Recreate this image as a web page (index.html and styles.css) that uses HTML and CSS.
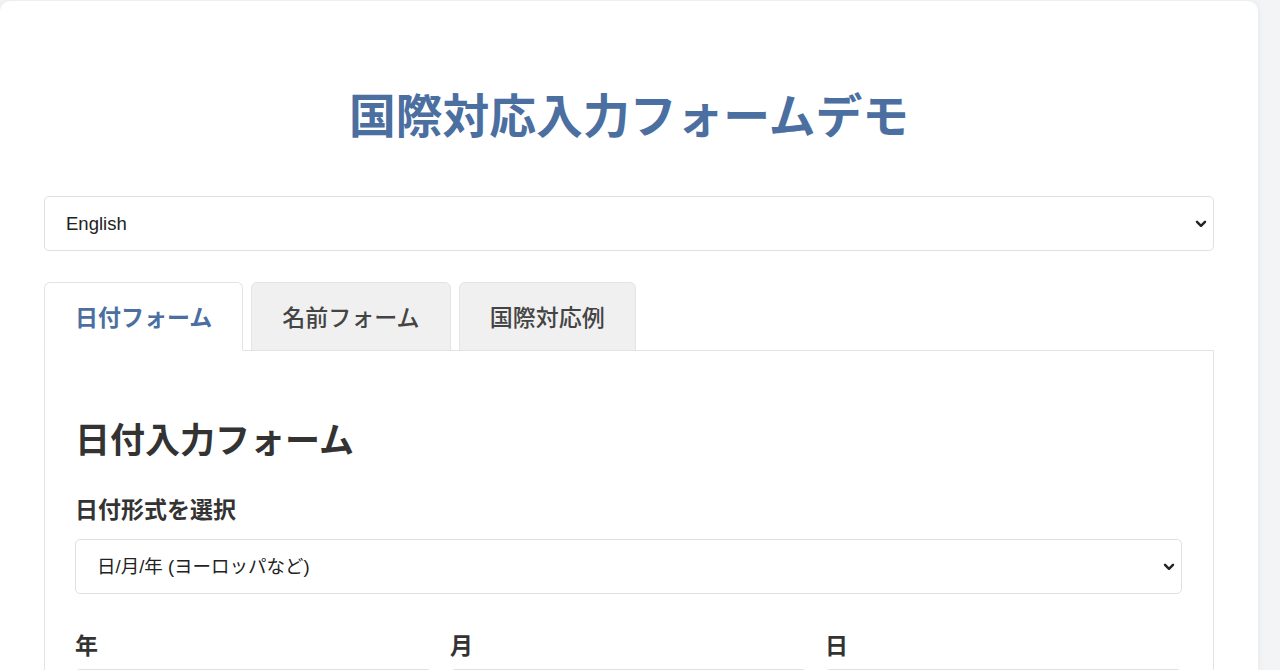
FILE: index.html
```html
<!DOCTYPE html>
<html lang="ja">
<head>
<meta charset="utf-8">
<title>国際対応入力フォームデモ</title>
<link rel="stylesheet" href="styles.css">
</head>
<body>
<div class="card">
  <h1 class="title">国際対応入力フォームデモ</h1>

  <div class="select-wrap lang">
    <select class="select">
      <option>English</option>
      <option>日本語</option>
    </select>
    <svg class="chev" viewBox="0 0 12 8" width="12" height="8" aria-hidden="true"><path d="M2 1.8 L6 5.8 L10 1.8" fill="none" stroke="#222" stroke-width="2.4" stroke-linecap="round" stroke-linejoin="round"/></svg>
  </div>

  <div class="tabs">
    <div class="tab active">日付フォーム</div>
    <div class="tab">名前フォーム</div>
    <div class="tab">国際対応例</div>
  </div>

  <div class="panel">
    <h2 class="panel-title">日付入力フォーム</h2>

    <label class="label">日付形式を選択</label>
    <div class="select-wrap fmt">
      <select class="select">
        <option>日/月/年 (ヨーロッパなど)</option>
        <option>年/月/日 (日本など)</option>
        <option>月/日/年 (アメリカなど)</option>
      </select>
      <svg class="chev" viewBox="0 0 12 8" width="12" height="8" aria-hidden="true"><path d="M2 1.8 L6 5.8 L10 1.8" fill="none" stroke="#222" stroke-width="2.4" stroke-linecap="round" stroke-linejoin="round"/></svg>
    </div>

    <div class="date-row">
      <div class="field">
        <label class="label small">年</label>
        <input class="input" type="text">
      </div>
      <div class="field">
        <label class="label small">月</label>
        <input class="input" type="text">
      </div>
      <div class="field">
        <label class="label small">日</label>
        <input class="input" type="text">
      </div>
    </div>
  </div>
</div>
</body>
</html>
```

FILE: styles.css
```css
* { box-sizing: border-box; }

html, body {
  margin: 0;
  padding: 0;
  background: #f3f4f6;
  font-family: "Noto Sans CJK JP", "Liberation Sans", sans-serif;
  color: #333;
}

body {
  height: 670px;
  overflow: hidden;
}

.card {
  width: 1258px;
  margin-top: 1px;
  background: #fff;
  border-radius: 10px;
  box-shadow: 0 0 8px rgba(0, 0, 0, 0.06);
  padding: 84px 44px 40px;
  min-height: 700px;
}

.title {
  margin: 0 0 55px;
  font-size: 46.8px;
  line-height: 56px;
  font-weight: 700;
  color: #4a6fa0;
  text-align: center;
}

.select-wrap {
  position: relative;
}

.select {
  display: block;
  width: 100%;
  height: 55px;
  appearance: none;
  -webkit-appearance: none;
  background: #fff;
  border: 1px solid #e0e0e0;
  border-radius: 5px;
  padding: 0 40px 0 21px;
  font-family: "Liberation Sans", "Noto Sans CJK JP", sans-serif;
  font-size: 18.5px;
  color: #222;
}

.chev {
  position: absolute;
  right: 7px;
  top: 50%;
  margin-top: -4px;
}

.lang {
  margin-bottom: 31px;
}

.tabs {
  display: flex;
  gap: 8px;
  position: relative;
  z-index: 1;
  margin-bottom: -1px;
}

.tab {
  height: 69px;
  display: flex;
  align-items: center;
  padding: 0 30px 1px;
  font-size: 23px;
  font-weight: 500;
  color: #444;
  background: #f0f0f0;
  border: 1px solid #e3e3e3;
  border-radius: 6px 6px 0 0;
}

.tab.active {
  background: #fff;
  color: #4a6fa0;
  font-weight: 700;
  border-bottom-color: #fff;
}

.panel {
  border: 1px solid #e3e3e3;
  border-bottom: none;
  padding: 32px 31px 40px 30px;
}

.panel-title {
  margin: 34px 0 37px;
  font-size: 35px;
  line-height: 41px;
  font-weight: 700;
  color: #333;
}

.label {
  display: block;
  font-size: 23px;
  line-height: 27px;
  font-weight: 700;
  color: #333;
  margin-bottom: 17px;
}

.fmt {
  margin-bottom: 37px;
}

.date-row {
  display: grid;
  grid-template-columns: repeat(3, 1fr);
  gap: 18px;
}

.label.small {
  margin-bottom: 11px;
}

.input {
  display: block;
  width: 100%;
  height: 55px;
  border: 1px solid #e0e0e0;
  border-radius: 5px;
  background: #fff;
}
```
